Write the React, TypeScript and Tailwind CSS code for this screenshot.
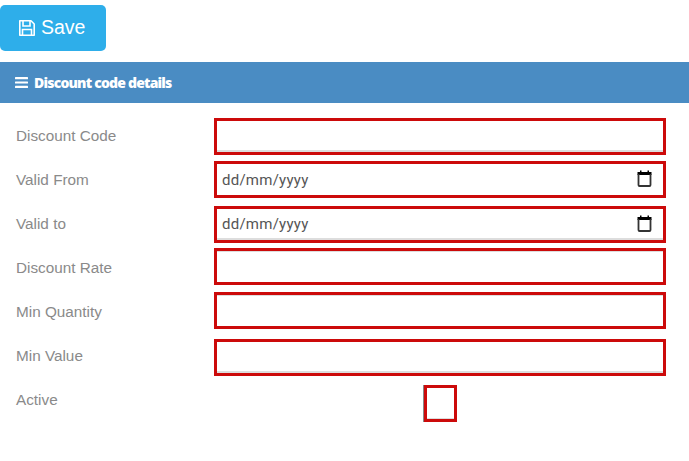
const rows = [
  { label: "Discount Code", date: false, box: "mt-[4px] shadow-[inset_0_-2px_0_#ddd]", field: "" },
  { label: "Valid From", date: true, box: "mt-[3px]", field: "" },
  { label: "Valid to", date: true, box: "mt-[4px] shadow-[inset_0_-2px_0_#ddd]", field: "pb-[2px]" },
  { label: "Discount Rate", date: false, box: "mt-[2px] shadow-[inset_0_1px_0_#ddd]", field: "" },
  { label: "Min Quantity", date: false, box: "mt-[2px] shadow-[inset_0_1px_0_#ddd]", field: "" },
  { label: "Min Value", date: false, box: "mt-[5px] shadow-[inset_0_-2px_0_#ddd]", field: "" },
]

function FloppyIcon() {
  return (
    <svg width="18" height="18" viewBox="0 0 18 18" fill="none" stroke="currentColor" strokeWidth="1.6">
      <path d="M1.8 1.8H13L16.2 5V16.2H1.8Z" strokeLinejoin="round" />
      <path d="M5 2V7H12V2" />
      <path d="M4.5 16V10.5H13.5V16" />
    </svg>
  )
}

function CalendarIcon() {
  return (
    <svg width="15" height="17" viewBox="0 0 15 17" className="absolute right-[11px] top-[6px]">
      <path d="M3 0.5H4.5V2H10.5V0.5H12V2H14.5V5H0.5V2H3Z" fill="#000" />
      <path d="M1.5 4V15C1.5 15.6 1.9 16 2.5 16H12.5C13.1 16 13.5 15.6 13.5 15V4" fill="none" stroke="#333" strokeWidth="1.8" />
    </svg>
  )
}

export default function App() {
  return (
    <div className="w-[689px] h-[461px] overflow-hidden bg-white font-['Roboto',sans-serif]">
      <div className="pt-[5px] pb-[11px]">
        <button className="flex items-center gap-[5px] w-[106px] h-[46px] pl-[18px] bg-[#2eaeea] rounded-[5px] text-white text-[19.5px] font-['Liberation_Sans',sans-serif]">
          <FloppyIcon />
          Save
        </button>
      </div>

      <div className="flex items-center gap-[6px] h-[41px] pl-[15px] bg-[#4a8cc3] text-white text-[14px] font-extrabold font-['Open_Sans',sans-serif] tracking-[-0.8px]">
        <svg width="13" height="11" viewBox="0 0 13 11" fill="currentColor">
          <rect y="0" width="13" height="2.2" rx="0.5" />
          <rect y="4.4" width="13" height="2.2" rx="0.5" />
          <rect y="8.8" width="13" height="2.2" rx="0.5" />
        </svg>
        Discount code details
      </div>

      <div className="flex flex-col pt-[11px] pl-[16px]">
        {rows.map((row) => (
          <div key={row.label} className="flex h-[44px]">
            <label className="w-[198px] leading-[44px] text-[15.3px] text-[#8a8a8a] font-['Liberation_Sans',sans-serif]">{row.label}</label>
            <div className={`relative w-[452px] h-[37px] border-[3px] border-[#cc0a0a] bg-white ${row.box}`}>
              {row.date && (
                <>
                  <input
                    type="text"
                    defaultValue="dd/mm/yyyy"
                    className={`w-full h-full pl-[5px] text-[15px] tracking-[0.25px] text-[#555] outline-none ${row.field}`}
                  />
                  <CalendarIcon />
                </>
              )}
              {!row.date && <input type="text" className="w-full h-full outline-none bg-transparent" />}
            </div>
          </div>
        ))}
        <div className="flex h-[44px]">
          <label className="w-[198px] leading-[44px] text-[15.3px] text-[#8a8a8a] font-['Liberation_Sans',sans-serif]">Active</label>
          <div className="flex justify-center w-[452px]">
            <div className="w-[33px] h-[37px] mt-[7px] border-[3px] border-[#cc0a0a] bg-white shadow-[-1px_0_0_#888,inset_0_-1px_0_#ddd]" />
          </div>
        </div>
      </div>
    </div>
  )
}
